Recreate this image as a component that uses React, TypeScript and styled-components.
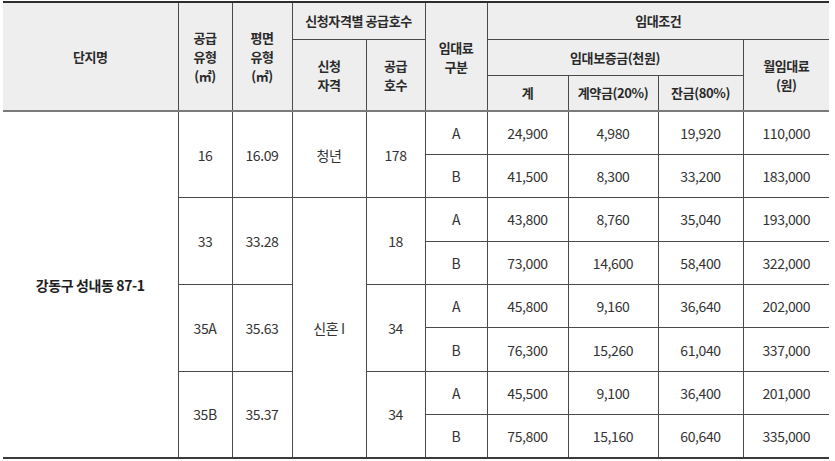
import React from 'react';
import styled, { createGlobalStyle } from 'styled-components';

const GlobalStyle = createGlobalStyle`
  html, body {
    margin: 0;
    padding: 0;
    background: #ffffff;
  }
  body {
    font-family: "Noto Sans CJK KR", "Noto Sans", sans-serif;
  }
`;

const Page = styled.div`
  padding: 1px 6px 0 3px;
  width: 835px;
  box-sizing: border-box;
`;

const Table = styled.table`
  width: 826px;
  table-layout: fixed;
  border-collapse: collapse;
  border-top: 2px solid #2e2e2e;
  border-bottom: 2px solid #3a3a3a;
  color: #2a2a2a;
  letter-spacing: -0.4px;
`;

const HeadRow = styled.tr<{ $h: number }>`
  height: ${p => p.$h}px;
`;

const BodyRow = styled.tr`
  height: 43.4px;
`;

const HeadCell = styled.th<{ $last?: boolean }>`
  background: #eeeeee;
  font-size: 13px;
  font-weight: 700;
  line-height: 19px;
  text-align: center;
  vertical-align: middle;
  padding: 0;
  border: 1px solid #4a4a4a;
  border-bottom-color: ${p => (p.$last ? '#7a7a7a' : '#4a4a4a')};
  border-bottom-width: ${p => (p.$last ? '2px' : '1px')};

  &:first-child {
    border-left: none;
  }
`;

const Cell = styled.td<{ $bold?: boolean }>`
  font-size: 14px;
  font-weight: ${p => (p.$bold ? 700 : 400)};
  text-align: center;
  vertical-align: middle;
  padding: 0;
  border: 1px solid #4a4a4a;
  color: ${p => (p.$bold ? '#1e1e1e' : '#333333')};
`;

const SiteCell = styled(Cell)`
  border-left: none;
`;

const EdgeCell = styled(Cell)`
  border-right: none;
`;

const EdgeHead = styled(HeadCell)`
  border-right: none;
`;

const widths = [175, 54, 60, 74, 59, 62, 81, 90, 85, 86];

type Rent = [string, string, string, string, string];

const groups: {
  supply: string;
  plan: string;
  qual?: { label: string; span: number };
  count: string;
  rents: Rent[];
}[] = [
  {
    supply: '16',
    plan: '16.09',
    qual: { label: '청년', span: 2 },
    count: '178',
    rents: [
      ['A', '24,900', '4,980', '19,920', '110,000'],
      ['B', '41,500', '8,300', '33,200', '183,000'],
    ],
  },
  {
    supply: '33',
    plan: '33.28',
    qual: { label: '신혼 I', span: 6 },
    count: '18',
    rents: [
      ['A', '43,800', '8,760', '35,040', '193,000'],
      ['B', '73,000', '14,600', '58,400', '322,000'],
    ],
  },
  {
    supply: '35A',
    plan: '35.63',
    count: '34',
    rents: [
      ['A', '45,800', '9,160', '36,640', '202,000'],
      ['B', '76,300', '15,260', '61,040', '337,000'],
    ],
  },
  {
    supply: '35B',
    plan: '35.37',
    count: '34',
    rents: [
      ['A', '45,500', '9,100', '36,400', '201,000'],
      ['B', '75,800', '15,160', '60,640', '335,000'],
    ],
  },
];

const App: React.FC = () => {
  return (
    <Page>
      <GlobalStyle />
      <Table>
        <colgroup>
          {widths.map((w, i) => (
            <col key={i} style={{ width: w }} />
          ))}
        </colgroup>
        <thead>
          <HeadRow $h={37}>
            <HeadCell rowSpan={3} $last>단지명</HeadCell>
            <HeadCell rowSpan={3} $last>
              공급
              <br />
              유형
              <br />
              (㎡)
            </HeadCell>
            <HeadCell rowSpan={3} $last>
              평면
              <br />
              유형
              <br />
              (㎡)
            </HeadCell>
            <HeadCell colSpan={2}>신청자격별 공급호수</HeadCell>
            <HeadCell rowSpan={3} $last>
              임대료
              <br />
              구분
            </HeadCell>
            <EdgeHead colSpan={4}>임대조건</EdgeHead>
          </HeadRow>
          <HeadRow $h={36}>
            <HeadCell rowSpan={2} $last>
              신청
              <br />
              자격
            </HeadCell>
            <HeadCell rowSpan={2} $last>
              공급
              <br />
              호수
            </HeadCell>
            <HeadCell colSpan={3}>임대보증금(천원)</HeadCell>
            <EdgeHead rowSpan={2} $last>
              월임대료
              <br />
              (원)
            </EdgeHead>
          </HeadRow>
          <HeadRow $h={36}>
            <HeadCell $last>계</HeadCell>
            <HeadCell $last>계약금(20%)</HeadCell>
            <HeadCell $last>잔금(80%)</HeadCell>
          </HeadRow>
        </thead>
        <tbody>
          {groups.map((g, gi) =>
            g.rents.map((r, ri) => (
              <BodyRow key={`${gi}-${ri}`}>
                {gi === 0 && ri === 0 && (
                  <SiteCell rowSpan={8} $bold>
                    강동구 성내동 87-1
                  </SiteCell>
                )}
                {ri === 0 && <Cell rowSpan={2}>{g.supply}</Cell>}
                {ri === 0 && <Cell rowSpan={2}>{g.plan}</Cell>}
                {ri === 0 && g.qual && <Cell rowSpan={g.qual.span}>{g.qual.label}</Cell>}
                {ri === 0 && <Cell rowSpan={2}>{g.count}</Cell>}
                <Cell>{r[0]}</Cell>
                <Cell>{r[1]}</Cell>
                <Cell>{r[2]}</Cell>
                <Cell>{r[3]}</Cell>
                <EdgeCell>{r[4]}</EdgeCell>
              </BodyRow>
            ))
          )}
        </tbody>
      </Table>
    </Page>
  );
};

export default App;
